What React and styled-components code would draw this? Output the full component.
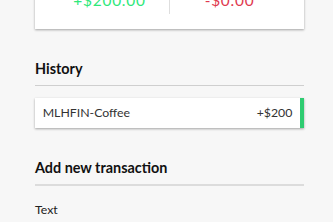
import React from "react";
import styled, { createGlobalStyle } from "styled-components";

const GlobalStyle = createGlobalStyle`
  * {
    box-sizing: border-box;
  }
  html, body {
    margin: 0;
    background-color: #f7f7f7;
    font-family: Lato, "Open Sans", sans-serif;
    overflow: hidden;
  }
`;

const Container = styled.div`
  width: 269px;
  margin-left: 35px;
  margin-top: -28px;
`;

const IncExpCard = styled.div`
  background-color: #fff;
  box-shadow: 0 1px 3px rgba(0, 0, 0, 0.12), 0 1px 2px rgba(0, 0, 0, 0.24);
  padding: 15px;
  display: flex;
  margin: 0 0 15px;
`;

const IncExpCol = styled.div`
  flex: 1;
  text-align: center;
  border-right: ${(p) => (p.$divider ? "1px solid #dedede" : "none")};
`;

const Money = styled.p`
  font-size: 15.4px;
  letter-spacing: 0.77px;
  margin: 4px 0;
  line-height: 19px;
  color: ${(p) => (p.$minus ? "#e0394f" : "#2ee87a")};
`;

const Heading = styled.h3`
  font-size: 14.4px;
  font-weight: 700;
  color: #111;
  line-height: 17.3px;
  border-bottom: ${(p) => (p.$thick ? "2px solid #dcdcdc" : "1px solid #cfcfcf")};
  padding-bottom: 7.7px;
  margin: 31px 0 7.7px;
`;

const List = styled.ul`
  list-style: none;
  padding: 0;
  margin: 12.3px 0 30px;
`;

const Item = styled.li`
  background-color: #fff;
  box-shadow: 0 1px 3px rgba(0, 0, 0, 0.12), 0 1px 2px rgba(0, 0, 0, 0.24);
  color: #333;
  font-size: 12.3px;
  line-height: 14.8px;
  display: flex;
  justify-content: space-between;
  padding: 7.7px;
  border-right: 4px solid ${(p) => (p.$minus ? "#c0392b" : "#2ecc71")};
`;

const Label = styled.label`
  display: inline-block;
  margin: 7.7px 0;
  font-size: 12.3px;
  color: #222;
`;

export default function App() {
  return (
    <>
      <GlobalStyle />
      <Container>
        <IncExpCard>
          <IncExpCol $divider>
            <Money>+$200.00</Money>
          </IncExpCol>
          <IncExpCol>
            <Money $minus>-$0.00</Money>
          </IncExpCol>
        </IncExpCard>

        <Heading>History</Heading>
        <List>
          <Item>
            MLHFIN-Coffee <span>+$200</span>
          </Item>
        </List>

        <Heading $thick>Add new transaction</Heading>
        <form>
          <div>
            <Label htmlFor="text">Text</Label>
          </div>
        </form>
      </Container>
    </>
  );
}
